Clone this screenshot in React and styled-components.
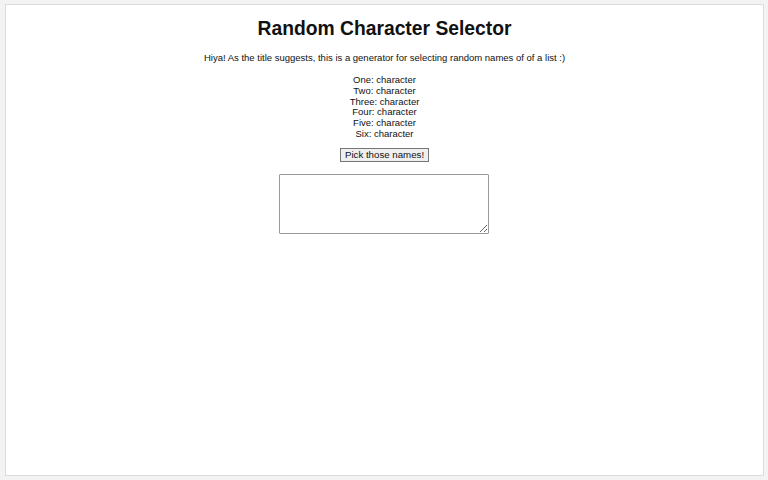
import styled, { createGlobalStyle } from 'styled-components';

const GlobalStyle = createGlobalStyle`
    html, body {
        margin: 0;
        padding: 0;
        height: 100%;
        background-color: #f3f3f3;
    }
    #root {
        height: 100%;
    }
`

const Frame = styled.div`
    box-sizing: border-box;
    margin: 4px 4px 0 5px;
    height: 472px;
    background-color: #ffffff;
    border: 1px solid #dcdcdc;
    display: flex;
    flex-direction: column;
    align-items: center;
    font-family: "Liberation Sans", Arial, sans-serif;
    color: #111;
`
const Title = styled.h1`
    margin: 13px 0 0;
    font-size: 19.3px;
    line-height: 22px;
    font-weight: bold;
`
const Intro = styled.p`
    margin: 12px 0 0;
    font-size: 9.5px;
    line-height: 11px;
`
const List = styled.div`
    margin-top: 12px;
    display: flex;
    flex-direction: column;
    align-items: center;
    font-size: 9.5px;
    line-height: 10.8px;
`
const PickBtn = styled.button`
    margin-top: 8px;
    padding: 0 4px;
    height: 14px;
    font-family: "Liberation Sans", Arial, sans-serif;
    font-size: 9.7px;
    color: #111;
    background-color: #efefef;
    border: 1px solid #767676;
    border-radius: 0;
`
const Output = styled.textarea`
    margin-top: 12px;
    margin-right: 1px;
    box-sizing: border-box;
    width: 210px;
    height: 60px;
    border: 1px solid #9a9a9a;
    border-radius: 1px;
`

const names = ['One', 'Two', 'Three', 'Four', 'Five', 'Six'];

const App = () => {
    return (
        <>
            <GlobalStyle />
            <Frame>
                <Title>Random Character Selector</Title>
                <Intro>Hiya! As the title suggests, this is a generator for selecting random names of of a list :)</Intro>
                <List>
                    {names.map((n) => (
                        <span key={n}>{n}: character</span>
                    ))}
                </List>
                <PickBtn>Pick those names!</PickBtn>
                <Output />
            </Frame>
        </>
    );
}

export default App;
